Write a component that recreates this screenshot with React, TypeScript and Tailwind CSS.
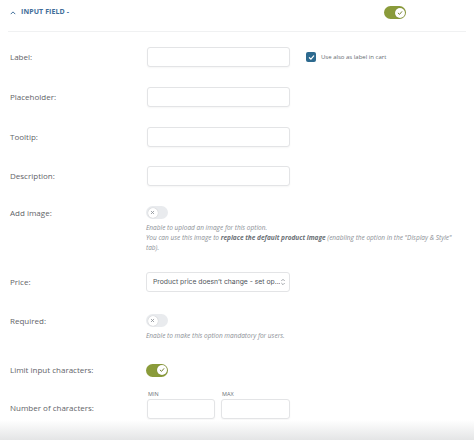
import { ReactNode } from "react";

type ToggleProps = {
    on?: boolean;
};

// small pill switch with a check (on) or a cross (off) inside the knob
function Toggle({ on }: ToggleProps) {
    return (
        <div
            className={`relative w-[22px] h-[13px] rounded-full ${
                on ? "bg-[#8a9b3a]" : "bg-[#e9ebee]"
            }`}
        >
            <div
                className={`absolute top-[1.5px] w-[10px] h-[10px] rounded-full bg-white flex items-center justify-center shadow-[0_0_1px_rgba(0,0,0,0.25)] ${
                    on ? "right-[1.5px]" : "left-[1.5px]"
                }`}
            >
                {on ? (
                    <svg width="6" height="6" viewBox="0 0 10 10">
                        <path
                            d="M2 5.2 L4.2 7.3 L8 2.8"
                            fill="none"
                            stroke="#6f7d2c"
                            strokeWidth="1.6"
                            strokeLinecap="round"
                        />
                    </svg>
                ) : (
                    <svg width="5" height="5" viewBox="0 0 10 10">
                        <path
                            d="M2.5 2.5 L7.5 7.5 M7.5 2.5 L2.5 7.5"
                            stroke="#8a8f96"
                            strokeWidth="1.6"
                            strokeLinecap="round"
                        />
                    </svg>
                )}
            </div>
        </div>
    );
}

function TextInput({ className = "w-[143px]" }: { className?: string }) {
    return (
        <div
            className={`h-[20px] rounded-[3px] border border-[#e3e4e6] bg-white shadow-[0_1px_2px_rgba(0,0,0,0.04)] ${className}`}
        />
    );
}

type RowProps = {
    label: string;
    children: ReactNode;
    className?: string;
};

function Row({ label, children, className = "" }: RowProps) {
    return (
        <div className={`flex ${className}`}>
            <div className="w-[147px] pl-[10px] shrink-0 flex items-center h-[20px] text-[8px] text-[#5f6368]">
                {label}
            </div>
            <div className="flex-1">{children}</div>
        </div>
    );
}

function Hint({ children }: { children: ReactNode }) {
    return (
        <div className="mt-[4px] w-[312px] text-[6.5px] leading-[10px] italic text-[#8c9096]">
            {children}
        </div>
    );
}

export default function App() {
    return (
        <div
            className="w-[474px] h-[440px] bg-white overflow-hidden flex flex-col"
            style={{ fontFamily: '"Open Sans", "Liberation Sans", sans-serif' }}
        >
            <div className="mx-[8px] h-[32px] border-b border-[#f0f1f2] flex items-start pt-[6px]">
                <div className="flex items-center h-[13px] pl-[2px] gap-[5px]">
                    <svg width="6" height="4" viewBox="0 0 8 5">
                        <path
                            d="M1 4 L4 1 L7 4"
                            fill="none"
                            stroke="#3f6d99"
                            strokeWidth="1.3"
                        />
                    </svg>
                    <span className="text-[7px] font-bold text-[#3f6d99] tracking-[0.1px]">
                        INPUT FIELD -
                    </span>
                </div>
                <div className="ml-auto mr-[60px]">
                    <Toggle on />
                </div>
            </div>

            <div className="flex flex-col mt-[15px]">
                <Row label="Label:">
                    <div className="flex items-center">
                        <TextInput />
                        <div className="ml-[16px] w-[10px] h-[10px] rounded-[2px] bg-[#2d6a8f] flex items-center justify-center">
                            <svg width="7" height="7" viewBox="0 0 10 10">
                                <path
                                    d="M2 5.3 L4.2 7.4 L8.2 2.8"
                                    fill="none"
                                    stroke="white"
                                    strokeWidth="1.7"
                                    strokeLinecap="round"
                                />
                            </svg>
                        </div>
                        <span className="ml-[5px] text-[6px] text-[#666b71]">
                            Use also as label in cart
                        </span>
                    </div>
                </Row>

                <Row label="Placeholder:" className="mt-[20px]">
                    <TextInput />
                </Row>

                <Row label="Tooltip:" className="mt-[20px]">
                    <TextInput />
                </Row>

                <Row label="Description:" className="mt-[19px]">
                    <TextInput />
                </Row>

                <div className="flex mt-[20px]">
                    <div className="w-[147px] pl-[10px] shrink-0 flex items-center h-[13px] text-[8px] text-[#5f6368]">
                        Add image:
                    </div>
                    <div className="-ml-[1px]">
                        <Toggle />
                        <Hint>
                            <div>Enable to upload an image for this option.</div>
                            <div className="whitespace-nowrap">
                                You can use this image to{" "}
                                <b className="font-bold text-[#6b6f75]">
                                    replace the default product image
                                </b>{" "}
                                (enabling the option in the "Display &amp;
                                Style"
                            </div>
                            <div>tab).</div>
                        </Hint>
                    </div>
                </div>

                <Row label="Price:" className="mt-[19px]">
                    <div
                        className="-ml-[1px] w-[144px] h-[20px] rounded-[3px] border border-[#e3e4e6] bg-white flex items-center pl-[6px] pr-[3px] text-[6.8px] text-[#50555b]"
                        style={{ fontFamily: 'Inter, "Liberation Sans", sans-serif' }}
                    >
                        <span className="flex-1 whitespace-nowrap overflow-hidden">
                            Product price doesn’t change - set op...
                        </span>
                        <svg width="6" height="8" viewBox="0 0 6 8">
                            <path
                                d="M1.3 3 L3 1.3 L4.7 3 M1.3 5 L3 6.7 L4.7 5"
                                fill="none"
                                stroke="#8a8f96"
                                strokeWidth="0.8"
                            />
                        </svg>
                    </div>
                </Row>

                <div className="flex mt-[22px]">
                    <div className="w-[147px] pl-[10px] shrink-0 flex items-center h-[13px] text-[8px] text-[#5f6368]">
                        Required:
                    </div>
                    <div className="-ml-[1px]">
                        <Toggle />
                        <Hint>Enable to make this option mandatory for users.</Hint>
                    </div>
                </div>

                <div className="flex mt-[22px]">
                    <div className="w-[147px] pl-[10px] shrink-0 flex items-center h-[14px] text-[8px] text-[#5f6368]">
                        Limit input characters:
                    </div>
                    <div className="-ml-[1px] h-[14px] flex items-center">
                        <Toggle on />
                    </div>
                </div>

                <div className="flex mt-[12px]">
                    <div className="w-[147px] pl-[10px] shrink-0 flex items-end h-[30px] pb-[5px] text-[8px] text-[#5f6368]">
                        Number of characters:
                    </div>
                    <div className="flex gap-[6px]">
                        <div>
                            <div className="h-[10px] pl-[1px] text-[5.5px] text-[#6b7076] leading-[10px]">
                                MIN
                            </div>
                            <TextInput className="w-[68px]" />
                        </div>
                        <div>
                            <div className="h-[10px] pl-[1px] text-[5.5px] text-[#6b7076] leading-[10px]">
                                MAX
                            </div>
                            <TextInput className="w-[69px]" />
                        </div>
                    </div>
                </div>
            </div>

            <div className="mt-auto h-[20px] bg-gradient-to-b from-white to-[#e4e5e6]" />
        </div>
    );
}
